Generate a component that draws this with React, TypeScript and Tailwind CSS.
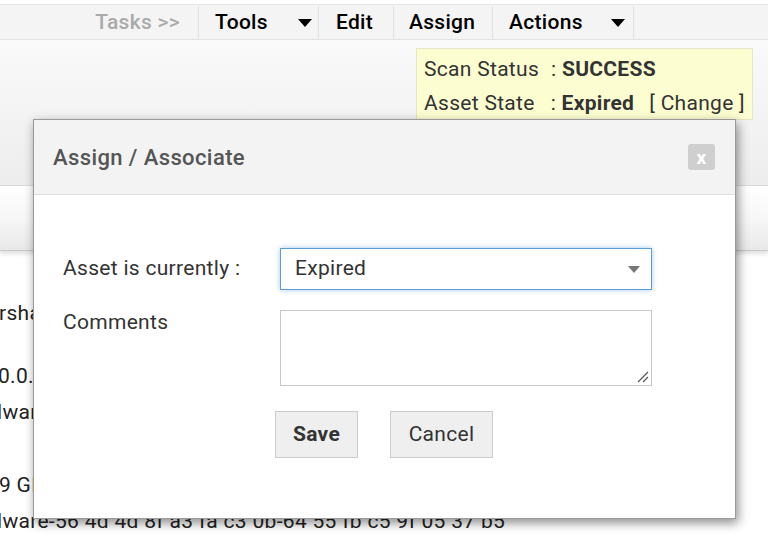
import React from "react";

const Caret = ({ className = "" }: { className?: string }) => (
  <svg viewBox="0 0 14 8" className={className} fill="currentColor">
    <path d="M0 0h14L7 8z" />
  </svg>
);

export default function App() {
  return (
    <div
      className="relative h-[546px] w-[768px] overflow-hidden bg-white tracking-[0.3px] text-[#333]"
      style={{ fontFamily: "Roboto, 'Liberation Sans', sans-serif" }}
    >
      {/* top tabs */}
      <div className="mt-[4px] flex h-[36px] items-stretch border-b border-[#e2e2e2] border-t border-t-[#e6e6e6] bg-[#f4f4f4] pt-[1px] text-[21px] font-medium">
        <div className="flex w-[198px] items-center justify-end pr-[18px] text-[#aaa]">
          Tasks &gt;&gt;
        </div>
        <div className="flex w-[120px] items-center justify-between border-l border-[#e0e0e0] pl-[16px] pr-[6px] text-black">
          Tools
          <Caret className="h-[8px] w-[14px]" />
        </div>
        <div className="flex w-[75px] items-center border-l border-[#e0e0e0] pl-[17px] text-black">
          Edit
        </div>
        <div className="flex w-[99px] items-center border-l border-[#e0e0e0] pl-[15px] text-black">
          Assign
        </div>
        <div className="flex w-[142px] items-center justify-between border-l border-r border-[#e0e0e0] pl-[16px] pr-[8px] text-black">
          Actions
          <Caret className="h-[8px] w-[14px]" />
        </div>
      </div>

      {/* header area */}
      <div className="flex h-[146px] justify-end border-b border-[#dcdcdc] bg-gradient-to-b from-[#fafafa] to-[#ededed] pr-[15px] pt-[8px]">
        <div className="h-[72px] w-[337px] whitespace-nowrap border border-[#e6e6c4] bg-[#fdfdd2] px-[7px] pt-[3px] text-[21px] leading-[34px]">
          <div className="flex">
            <span className="w-[127px]">Scan Status</span>
            <span>: <b className="font-bold">SUCCESS</b></span>
          </div>
          <div className="flex">
            <span className="w-[127px]">Asset State</span>
            <span>
              : <b className="font-bold">Expired</b>
              <span className="ml-[15px]">[ Change ]</span>
            </span>
          </div>
        </div>
      </div>

      {/* toolbar band */}
      <div className="h-[65px] border-b border-[#c8c8c8] bg-gradient-to-b from-white via-[#f7f7f7] to-[#e8e8e8] shadow-[0_3px_4px_rgba(0,0,0,0.12)]" />

      {/* page content */}
      <div className="whitespace-nowrap pt-[44px] text-[21px] leading-[36px] text-[#222]">
        <div className="-ml-[1px]">rshare</div>
        <div className="mt-[27px] -ml-[2px]">0.0.0</div>
        <div className="-ml-[3px]">lware</div>
        <div className="mt-[37px] -ml-[1px]">9 GB</div>
        <div className="-ml-[3px]">lware-56 4d 4d 8f a3 fa c3 0b-64 55 fb c5 9f 05 37 b5</div>
      </div>

      {/* modal */}
      <div className="absolute left-[33px] top-[119px] h-[400px] w-[703px] border border-[#9a9a9a] bg-white shadow-[2px_4px_10px_rgba(0,0,0,0.45)]">
        <div className="flex h-[75px] items-center justify-between border-b border-[#dedede] bg-[#f3f3f3] pl-[19px] pr-[20px]">
          <span className="text-[22px] font-medium tracking-[0.4px] text-[#555]">Assign / Associate</span>
          <button className="flex h-[26px] w-[27px] items-center justify-center rounded-[3px] bg-[#cfcfcf] text-[19px] font-bold leading-none text-white">
            x
          </button>
        </div>

        <div className="px-[29px] pt-[53px]">
          <div className="flex items-center">
            <span className="w-[217px] text-[21px]">Asset is currently :</span>
            <div className="flex h-[42px] w-[372px] items-center justify-between border border-[#5b9bd9] bg-white pl-[14px] pr-[11px] text-[21px] shadow-[0_0_5px_rgba(91,155,217,0.55)]">
              Expired
              <Caret className="h-[7px] w-[12px] text-[#777]" />
            </div>
          </div>

          <div className="mt-[20px] flex items-start">
            <span className="-mt-[3px] w-[217px] text-[21px]">Comments</span>
            <div className="relative h-[76px] w-[372px] border border-[#c8c8c8] bg-white">
              <svg viewBox="0 0 12 12" className="absolute bottom-[2px] right-[2px] h-[12px] w-[12px]" stroke="#555" strokeWidth="1.2">
                <path d="M1 11L11 1M6 11L11 6" />
              </svg>
            </div>
          </div>

          <div className="mt-[25px] flex gap-[32px] pl-[212px]">
            <button className="h-[47px] w-[83px] border border-[#cccccc] bg-[#efefef] text-[21px] font-bold text-[#333]">
              Save
            </button>
            <button className="h-[47px] w-[103px] border border-[#cccccc] bg-[#efefef] text-[21px] text-[#333]">
              Cancel
            </button>
          </div>
        </div>
      </div>
    </div>
  );
}
